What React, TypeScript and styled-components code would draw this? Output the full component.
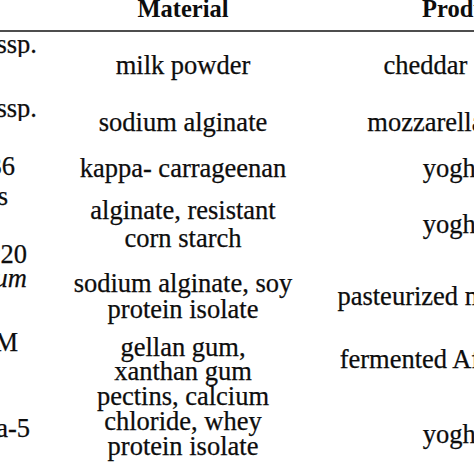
import React from "react";
import styled, { createGlobalStyle } from "styled-components";

const Global = createGlobalStyle`
  html, body { margin: 0; padding: 0; background: #ffffff; }
  body {
    font-family: "Liberation Serif", "Times New Roman", serif;
    color: #0d0d0d;
  }
`;

const Page = styled.div`
  width: 474px;
  height: 474px;
  overflow: hidden;
  background: #ffffff;
`;

const COLS = "60px 246px 316px";

const Head = styled.div`
  display: grid;
  grid-template-columns: ${COLS};
  width: 622px;
  height: 30px;
  border-bottom: 2px solid #4d4d4d;
  font-weight: 700;
  font-size: 24.5px;
  line-height: 17px;
`;

const HeadCell = styled.div<{ $col: number }>`
  grid-column: ${(p) => p.$col};
  text-align: center;
  white-space: nowrap;
`;

const Body = styled.div<{ $rows: string }>`
  display: grid;
  grid-template-columns: ${COLS};
  grid-template-rows: ${(p) => p.$rows};
  width: 622px;
  font-size: 26.5px;
  -webkit-text-stroke: 0.25px #0d0d0d;
`;

const Row = styled.div`
  display: contents;
`;

const StrainCell = styled.div<{ $top: number; $lh: number }>`
  align-self: start;
  margin-top: ${(p) => p.$top}px;
  line-height: ${(p) => p.$lh}px;
  display: flex;
  flex-direction: column;
`;

const Tail = styled.div<{ $end: number; $italic?: boolean }>`
  width: ${(p) => p.$end}px;
  display: flex;
  justify-content: flex-end;
  overflow: hidden;
  white-space: nowrap;
  font-style: ${(p) => (p.$italic ? "italic" : "normal")};
  & > span {
    flex-shrink: 0;
  }
`;

const MaterialCell = styled.div<{ $lh: number; $align?: string }>`
  align-self: ${(p) => p.$align ?? "center"};
  line-height: ${(p) => p.$lh}px;
  text-align: center;
  white-space: nowrap;
  display: flex;
  flex-direction: column;
  align-items: center;
`;

const ProductCell = styled.div`
  align-self: center;
  line-height: 25px;
  text-align: center;
  white-space: nowrap;
`;

type StrainLine = { text: string; end: number; italic?: boolean };
type TableRow = {
  height: number;
  strain: { top: number; lh: number; lines: StrainLine[] };
  material: { lh: number; align?: string; lines: string[] };
  product: string;
};

const rows: TableRow[] = [
  {
    height: 66,
    strain: { top: 0, lh: 25, lines: [{ text: "Lactobacillus casei ssp.", end: 37 }] },
    material: { lh: 25, lines: ["milk powder"] },
    product: "cheddar cheese",
  },
  {
    height: 48,
    strain: { top: -2, lh: 25, lines: [{ text: "Lactobacillus paracasei ssp.", end: 37 }] },
    material: { lh: 25, lines: ["sodium alginate"] },
    product: "mozzarella cheese",
  },
  {
    height: 44,
    strain: { top: 7.5, lh: 25, lines: [{ text: "Bifidobacterium BB36", end: 15 }] },
    material: { lh: 25, lines: ["kappa- carrageenan"] },
    product: "yoghurt",
  },
  {
    height: 68,
    strain: {
      top: -8.5,
      lh: 29,
      lines: [
        { text: "Bifidobacterium bifidus", end: 8 },
        { text: "", end: 8 },
        { text: "ATCC 4P20", end: 27 },
      ],
    },
    material: { lh: 28, lines: ["alginate, resistant", "corn starch"] },
    product: "yoghurt",
  },
  {
    height: 76,
    strain: {
      top: 7.5,
      lh: 25,
      lines: [{ text: "Lactobacillus plantarum", end: 27, italic: true }],
    },
    material: { lh: 26, lines: ["sodium alginate, soy", "protein isolate"] },
    product: "pasteurized milk cheese",
  },
  {
    height: 50,
    strain: { top: -4.5, lh: 25, lines: [{ text: "L. acidophilus NCFM", end: 18 }] },
    material: { lh: 24, lines: ["gellan gum,", "xanthan gum"] },
    product: "fermented African milk",
  },
  {
    height: 100,
    strain: {
      top: 31.5,
      lh: 25,
      lines: [{ text: "Lactobacillus acidophilus La-5", end: 30 }],
    },
    material: {
      lh: 25,
      align: "start",
      lines: ["pectins, calcium", "chloride, whey", "protein isolate"],
    },
    product: "yoghurt",
  },
];

export default function App() {
  const template = rows.map((r) => `${r.height}px`).join(" ");
  return (
    <Page>
      <Global />
      <Head>
        <HeadCell $col={2}>Material</HeadCell>
        <HeadCell $col={3}>Product</HeadCell>
      </Head>
      <Body $rows={template}>
        {rows.map((r, i) => (
          <Row key={i}>
            <StrainCell $top={r.strain.top} $lh={r.strain.lh}>
              {r.strain.lines.map((l, j) => (
                <Tail key={j} $end={l.end} $italic={l.italic}>
                  <span>{l.text || "\u00a0"}</span>
                </Tail>
              ))}
            </StrainCell>
            <MaterialCell $lh={r.material.lh} $align={r.material.align}>
              {r.material.lines.map((m, j) => (
                <span key={j}>{m}</span>
              ))}
            </MaterialCell>
            <ProductCell>{r.product}</ProductCell>
          </Row>
        ))}
      </Body>
    </Page>
  );
}
